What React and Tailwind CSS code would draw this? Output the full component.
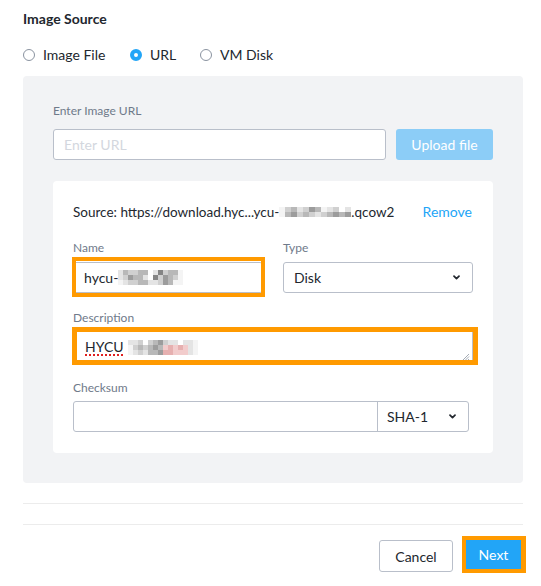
import React from "react";

const shades = {
  a: "bg-[#e4e4e4]",
  b: "bg-[#d0d0d0]",
  c: "bg-[#b8b8b8]",
  d: "bg-[#9c9c9c]",
  e: "bg-[#858585]",
  f: "bg-[#f2cccc]",
  g: "bg-[#e6b0b0]",
  w: "bg-[#f4f4f4]",
};

function Blur({ rows, cell = "w-[5px] h-[5px]" }) {
  return (
    <span className="inline-flex flex-col align-middle">
      {rows.map((r, i) => (
        <span key={i} className="flex">
          {r.split("").map((k, j) => (
            <span key={j} className={`${cell} ${shades[k]}`} />
          ))}
        </span>
      ))}
    </span>
  );
}

function Chevron() {
  return (
    <svg width="7" height="5" viewBox="0 0 7 5" className="text-[#22272e]">
      <path d="M1 1.2 L3.5 3.7 L6 1.2" fill="none" stroke="currentColor" strokeWidth="1.7" strokeLinecap="round" strokeLinejoin="round" />
    </svg>
  );
}

function Radio({ checked, label }) {
  return (
    <label className="flex items-center gap-[8px]">
      {checked ? (
        <span className="w-[12px] h-[12px] rounded-full border-[4px] border-[#22a5f7] bg-white" />
      ) : (
        <span className="w-[12px] h-[12px] rounded-full border-[1.5px] border-[#8a93a0] bg-white" />
      )}
      <span className="text-[14px] leading-[16px] text-[#22272e]">{label}</span>
    </label>
  );
}

export default function App() {
  return (
    <div
      className="w-[541px] h-[586px] bg-white pl-[23px] pr-[18px] pt-[11px] overflow-hidden"
      style={{ fontFamily: "Lato, 'Open Sans', sans-serif" }}
    >
      <div className="text-[14px] leading-[16px] font-bold text-[#22272e]">Image Source</div>

      <div className="mt-[20px] flex items-center">
        <div className="w-[107px]">
          <Radio label="Image File" />
        </div>
        <div className="w-[70px]">
          <Radio checked label="URL" />
        </div>
        <Radio label="VM Disk" />
      </div>

      <div className="mt-[13px] rounded-[4px] bg-[#f2f3f5] px-[30px] pt-[28px] pb-[30px]">
        <div className="text-[12px] leading-[14px] text-[#6f7a8a]">Enter Image URL</div>
        <div className="mt-[11px] flex gap-[10px]">
          <div className="flex-1 h-[31px] rounded-[3px] border border-[#b9bfca] bg-white px-[10px] flex items-center">
            <span className="text-[14px] text-[#d3d7de]">Enter URL</span>
          </div>
          <button className="w-[97px] h-[31px] rounded-[3px] bg-[#8ccdf7] text-white text-[14px]">
            Upload file
          </button>
        </div>

        <div className="mt-[21px] rounded-[4px] bg-white px-[20px] pt-[23px] pb-[21px]">
          <div className="flex items-center justify-between leading-[16px]">
            <span className="text-[13.5px] text-[#22272e] flex items-center">
              Source: https://download.hyc...ycu-
              <Blur cell="w-[6px] h-[5px]" rows={["wbcabdcwab.a", "wcdbcbabcdcd"]} />
              .qcow2
            </span>
            <span className="text-[14px] text-[#22a5f7] pr-[1px]">Remove</span>
          </div>

          <div className="mt-[21px] grid grid-cols-[190px_190px] gap-x-[20px]">
            <div>
              <div className="text-[12px] leading-[14px] text-[#6f7a8a]">Name</div>
              <div className="relative mt-[7px]">
                <div className="h-[31px] rounded-[3px] border border-[#b9bfca] bg-white px-[10px] flex items-center text-[14px] text-[#22272e]">
                  hycu-
                  <Blur rows={["acbbcc.aebccw", "abdcca.ebdcbw", "wabbccaabdcww"]} />
                </div>
                <div className="absolute left-[-1px] top-[-5px] right-[-2px] bottom-[-4px] border-[4px] border-[#ff9a00]" />
              </div>
            </div>
            <div>
              <div className="text-[12px] leading-[14px] text-[#6f7a8a]">Type</div>
              <div className="mt-[7px] h-[31px] rounded-[3px] border border-[#b9bfca] bg-white pl-[10px] pr-[12px] flex items-center justify-between text-[14px] text-[#22272e]">
                Disk
                <Chevron />
              </div>
            </div>
          </div>

          <div className="mt-[18px] text-[12px] leading-[14px] text-[#6f7a8a]">Description</div>
          <div className="relative mt-[3px]">
            <div className="relative h-[36px] rounded-[3px] border border-[#b9bfca] bg-white pl-[11px] flex items-center text-[14px] text-[#22272e]">
              <span className="underline decoration-dotted decoration-[#e02020] decoration-2 underline-offset-[3px]">HYCU</span>
              <span className="ml-[4px]">
                <Blur rows={["aab.bcdbaa.aaw", "wbcbcdcfgfgfaw", "wabaccdggfffaw"]} />
              </span>
              <svg width="9" height="9" viewBox="0 0 9 9" className="absolute right-[2px] bottom-[2px]">
                <path d="M8 2 L2 8 M8 4.5 L4.5 8 M8 7 L7 8" stroke="#9aa1ab" strokeWidth="0.9" />
              </svg>
            </div>
            <div className="absolute left-[-1px] top-[-1px] right-[-5px] bottom-[-1px] border-[5px] border-[#ff9a00]" />
          </div>

          <div className="mt-[17px] text-[12px] leading-[14px] text-[#6f7a8a]">Checksum</div>
          <div className="mt-[6px] w-[396px] h-[31px] rounded-[3px] border border-[#b9bfca] bg-white flex">
            <div className="flex-1" />
            <div className="w-[91px] border-l border-[#b9bfca] pl-[9px] pr-[12px] flex items-center justify-between text-[14px] text-[#22272e]">
              SHA-1
              <Chevron />
            </div>
          </div>
        </div>
      </div>

      <div className="mt-[20px] w-[500px] border-t border-[#ececec]" />
      <div className="mt-[20px] w-[500px] border-t border-[#ececec]" />

      <div className="mt-[11px] w-[503px] flex justify-end items-start">
        <button className="mt-[4px] w-[74px] h-[32px] rounded-[3px] border border-[#b9bfca] bg-white text-[14px] text-[#22272e]">
          Cancel
        </button>
        <div className="ml-[9px] pl-[4px] pr-[5px] py-[4px] bg-[#ff9a00]">
          <button className="block w-[55px] h-[29px] bg-[#22a5f7] text-white text-[14px]">Next</button>
        </div>
      </div>
    </div>
  );
}
